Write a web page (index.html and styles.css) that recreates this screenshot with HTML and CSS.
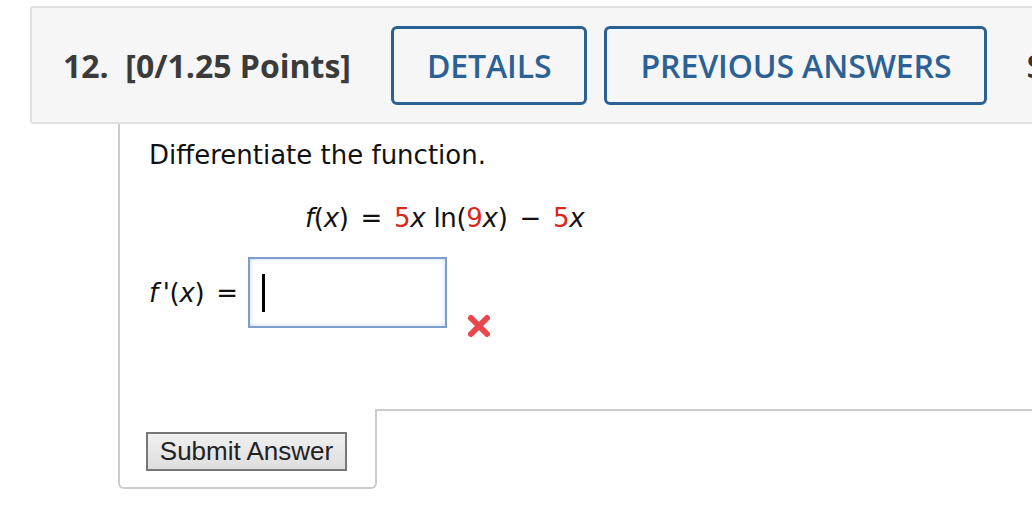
FILE: index.html
```html
<!DOCTYPE html>
<html>
<head>
<meta charset="utf-8">
<link rel="stylesheet" href="styles.css">
</head>
<body>
<div class="question">
  <div class="header">
    <div class="title">12.&nbsp; [0/1.25 Points]</div>
    <div class="btn">DETAILS</div>
    <div class="btn">PREVIOUS ANSWERS</div>
    <div class="more">SUBMISSIONS</div>
  </div>
  <div class="content">
    <p class="prompt">Differentiate the function.</p>
    <p class="eq"><i>f</i>(<i>x</i>) <span class="op">=</span> <span class="num">5</span><i>x</i> ln(<span class="num">9</span><i>x</i>) <span class="op">−</span> <span class="num">5</span><i>x</i></p>
    <div class="answer">
      <span class="label"><i>f</i>&thinsp;'(<i>x</i>) <span class="op">=</span></span>
      <div class="input"><span class="caret"></span></div>
      <svg class="wrong" width="28" height="28" viewBox="0 0 28 28">
        <path d="M6 6 L22 22 M22 6 L6 22" stroke="#e8484d" stroke-width="6" stroke-linecap="round"/>
      </svg>
    </div>
  </div>
  <div class="footer">
    <div class="tab"><button class="submit">Submit Answer</button></div>
    <div class="fill"></div>
  </div>
</div>
</body>
</html>
```
FILE: styles.css
```css
html, body {
  margin: 0;
  padding: 0;
  background: #ffffff;
  overflow: hidden;
}
.question {
  margin: 6px 0 0 30px;
}
.header {
  display: flex;
  align-items: center;
  height: 114px;
  border: 2px solid #e0e0e0;
  border-right: none;
  border-radius: 3px 0 0 3px;
  background: #f6f6f6;
  padding-left: 31px;
  white-space: nowrap;
  font-family: "Open Sans", sans-serif;
}
.title {
  font-size: 32px;
  font-weight: 700;
  color: #3b3b3b;
  margin-right: 40px;
}
.btn {
  height: 73px;
  box-sizing: content-box;
  display: flex;
  align-items: center;
  padding: 0 33px;
  border: 3px solid #2b6194;
  border-radius: 6px;
  color: #2b6194;
  font-size: 32px;
  font-weight: 600;
  letter-spacing: -0.1px;
  margin-right: 17px;
}
.more {
  margin-left: 22px;
  font-size: 32px;
  font-weight: 600;
  color: #333;
}
.content {
  margin-left: 88px;
  border-left: 2px solid #cccccc;
  height: 285px;
  padding-left: 29px;
  font-family: "DejaVu Sans", Verdana, sans-serif;
  font-size: 26px;
  color: #111;
}
.prompt {
  margin: 0;
  padding-top: 16px;
}
.eq {
  margin: 33px 0 0 156px;
  letter-spacing: -0.3px;
}
.op {
  margin: 0 4px;
}
.num {
  color: #d42a20;
}
.answer {
  display: flex;
  align-items: center;
  margin-top: 24px;
}
.label {
  margin-right: 6px;
  letter-spacing: -0.3px;
}
.input {
  height: 67px;
  border: 2px solid #7d9ec8;
  box-shadow: inset 0 0 5px #c8dcf6;
  background: #fff;
  display: flex;
  align-items: center;
  padding-left: 12px;
  box-sizing: content-box;
  width: 183px;
}
.caret {
  display: block;
  width: 3px;
  height: 38px;
  background: #000;
}
.wrong {
  align-self: flex-end;
  margin: 0 0 -12px 18px;
  filter: blur(0.6px);
}
.footer {
  display: flex;
  margin-left: 88px;
}
.tab {
  width: 229px;
  height: 78px;
  border: 2px solid #cccccc;
  border-top: none;
  border-radius: 0 0 6px 6px;
  padding-left: 26px;
  box-sizing: content-box;
}
.submit {
  margin-top: 23px;
  width: 201px;
  height: 39px;
  border: 2px solid #777;
  border-radius: 0;
  background: linear-gradient(#f0f0f0, #dedede);
  font-family: "Liberation Sans", Arial, sans-serif;
  font-size: 26px;
  color: #222;
  padding: 0;
}
.fill {
  flex: 1;
  border-top: 2px solid #cccccc;
  border-top-left-radius: 4px;
  margin-left: -2px;
}
```
